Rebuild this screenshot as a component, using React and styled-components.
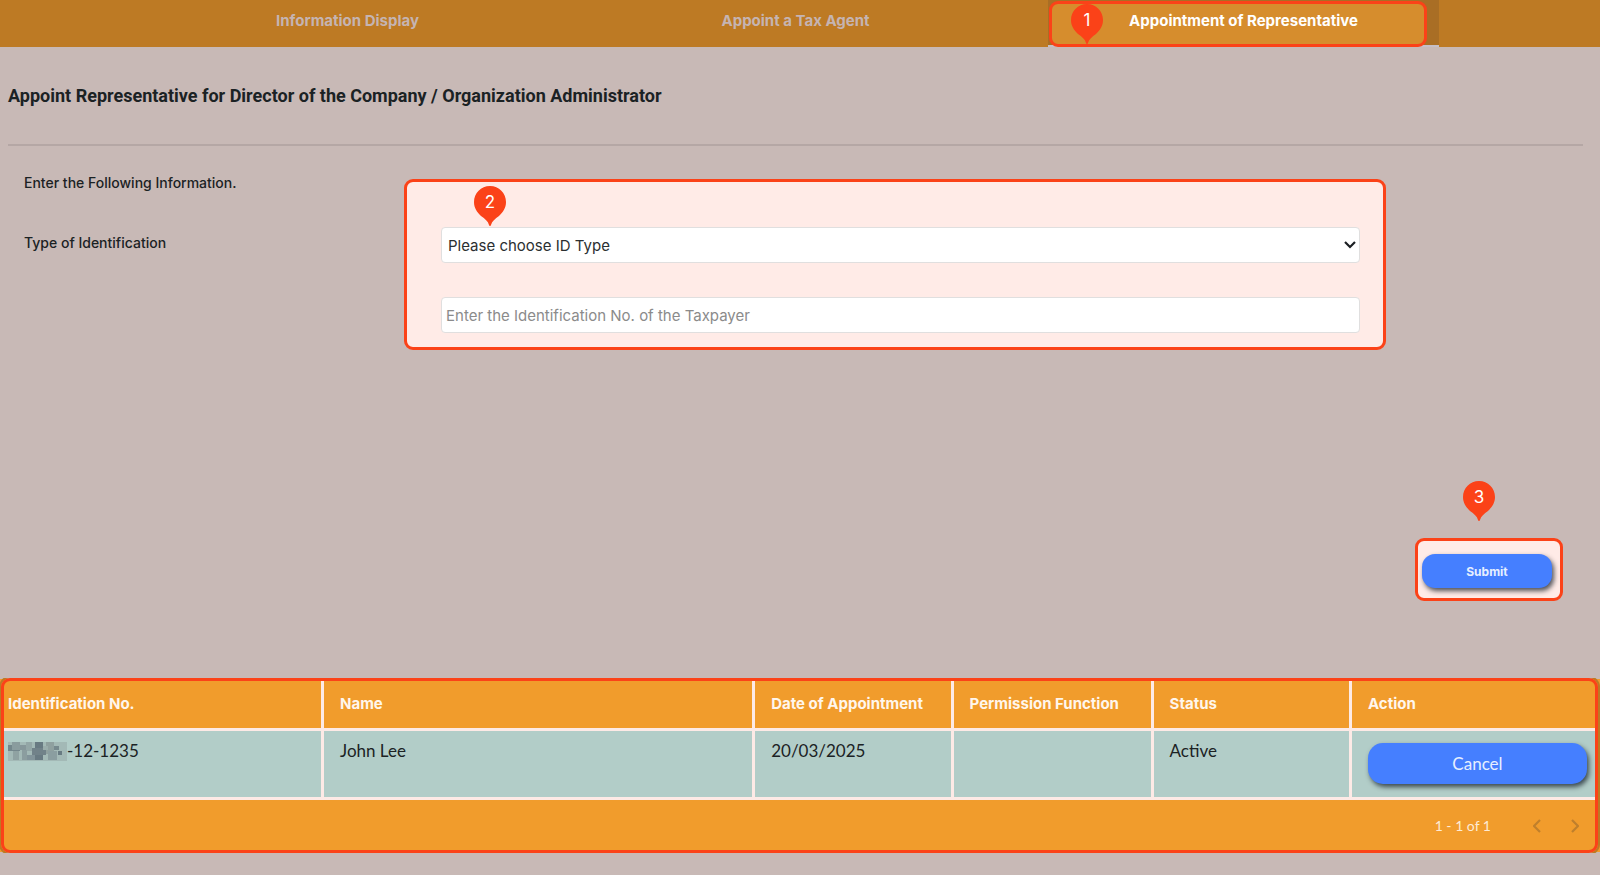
import React from "react";
import styled, { createGlobalStyle } from "styled-components";

const ui = '"Inter", "Liberation Sans", sans-serif';
const humanist = '"Lato", "Open Sans", sans-serif';
const red = "#fb4218";

const GlobalStyle = createGlobalStyle`
  *, *::before, *::after { box-sizing: border-box; }
  body { margin: 0; background: #c8b9b6; color: #1b2224; font-family: ${ui}; }
`;

const Page = styled.div`
  min-height: 100vh;
  overflow-x: hidden;
`;

const TabBar = styled.nav`
  display: grid;
  grid-template-columns: repeat(3, 1fr);
  gap: 57px;
  height: 47px;
  padding: 0 161px 0 152px;
  background: #bd7a24;
`;

const Tab = styled.button`
  position: relative;
  display: flex;
  align-items: center;
  justify-content: center;
  height: 47px;
  border: 0;
  padding: 0 0 6px;
  background: ${(p) => (p.$active ? "#a96e25" : "transparent")};
  box-shadow: ${(p) => (p.$active ? "inset 0 -2px #c6bfc6" : "none")};
  color: ${(p) => (p.$active ? "#fff" : "#c5b4b2")};
  font: 700 15px ${ui};
`;

const TabLabel = styled.span`
  position: relative;
`;

const TabHighlight = styled.span`
  position: absolute;
  inset: 1px 12px 0 1px;
  border: 3px solid ${red};
  border-radius: 9px;
  background: #d68d2d;
`;

const PinBox = styled.span`
  position: absolute;
  left: ${(p) => p.$left}px;
  top: ${(p) => p.$top}px;
  width: 32px;
  height: 40px;
  color: #fff;
  font: 400 17px/32px ${ui};
  text-align: center;
`;

const PinShape = styled.svg`
  position: absolute;
  inset: 0;
`;

const PinNumber = styled.span`
  position: relative;
  display: block;
`;

const Main = styled.main`
  padding: 0 17px 0 8px;
`;

const Title = styled.h1`
  margin: 0;
  padding: 36px 0;
  border-bottom: 2px solid #b5a7a5;
  font: 700 18px/25px "Roboto", sans-serif;
`;

const Form = styled.form`
  display: flex;
  flex-direction: column;
`;

const FormGrid = styled.div`
  display: grid;
  grid-template-columns: 396fr 982fr 197fr;
  padding-top: 33px;
`;

const Labels = styled.div`
  display: flex;
  flex-direction: column;
  gap: 40px;
  padding-left: 16px;
  font: 500 14px/20px ${ui};
  margin-top: -6px;
`;

const Lead = styled.p`
  margin: 0;
`;

const Highlight = styled.div`
  position: relative;
  border: 3px solid ${red};
  border-radius: 9px;
  background: #ffebe7;
`;

const Fields = styled(Highlight)`
  display: flex;
  flex-direction: column;
  gap: 34px;
  padding: 45px 23px 14px 34px;
`;

const control = `
  width: 100%;
  height: 36px;
  border: 1px solid #e0dfdf;
  border-radius: 4px;
  background: #fff;
  color: #2b2f31;
`;

const SelectWrap = styled.div`
  position: relative;
  display: flex;
`;

const Select = styled.select`
  ${control}
  appearance: none;
  padding: 0 32px 0 6px;
  font: 400 15px ${ui};
`;

const SelectArrow = styled.svg`
  position: absolute;
  right: 4px;
  top: 14px;
  pointer-events: none;
`;

const TextInput = styled.input`
  ${control}
  padding: 0 4px;
  font: 400 15px ${ui};
  &::placeholder { color: #8b8b8b; opacity: 1; }
`;

const Actions = styled.div`
  display: flex;
  justify-content: flex-end;
  padding: 188px 20px 78px 0;
`;

const SubmitBox = styled(Highlight)`
  width: 148px;
  padding: 13px 8px 10px 4px;
`;

const ActionButton = styled.button`
  display: block;
  width: 100%;
  height: ${(p) => (p.$large ? 41 : 34)}px;
  margin-top: ${(p) => (p.$large ? 2 : 0)}px;
  border: 0;
  padding: 0;
  border-radius: ${(p) => (p.$large ? 15 : 13)}px;
  background: #457fff;
  box-shadow: 2px 3px 5px rgba(20, 30, 40, 0.75);
  color: #e6efff;
  font: ${(p) => (p.$large ? `400 17px ${humanist}` : `700 12px ${ui}`)};
`;

const TablePanel = styled.section`
  position: relative;
  background: #f19c2c;
`;

const TableFrame = styled.div`
  position: absolute;
  inset: -1px 2px -1px 1px;
  border: 3px solid ${red};
  border-radius: 9px;
  box-shadow: 0 0 0 2px #bd7a24;
  clip-path: inset(0 -2px);
  pointer-events: none;
`;

const Table = styled.table`
  width: 100%;
  table-layout: fixed;
  border-collapse: separate;
  border-spacing: 0;
`;

const Col = styled.col`
  width: ${(p) => p.$share}%;
`;

const cell = `
  border-bottom: 3px solid #fdeae6;
  text-align: left;
  &:first-child { padding-left: 8px; }
  &:not(:last-child) { border-right: 3px solid #fdeae6; }
`;

const Th = styled.th`
  height: 52px;
  padding: 0 0 0 16px;
  color: #fff6ec;
  font: 700 15px/20px ${ui};
  ${cell}
`;

const Td = styled.td`
  height: 69px;
  padding: 10px 13px 0 16px;
  background: #b2cdc8;
  color: #1b2224;
  font: 400 17px/20px ${humanist};
  vertical-align: top;
  ${cell}
`;

const Masked = styled.span`
  display: flex;
  align-items: center;
`;

const Pager = styled.div`
  display: flex;
  align-items: center;
  justify-content: flex-end;
  height: 52px;
  padding-right: 14px;
  color: #fdebd5;
  font: 400 14px/20px ${humanist};
`;

const PagerText = styled.span`
  margin-right: 35px;
`;

const PagerButton = styled.button`
  display: flex;
  align-items: center;
  justify-content: center;
  width: 22px;
  height: 24px;
  margin-left: ${(p) => (p.$next ? 16 : 0)}px;
  border: 0;
  padding: 0;
  background: transparent;
`;

function Pin({ n, left, top }) {
  return (
    <PinBox $left={left} $top={top}>
      <PinShape width="32" height="40" viewBox="0 0 32 40" aria-hidden="true">
        <path
          fill={red}
          d="M16 0C7 0 0 7 0 16c0 6 3 10 7 14 4 3 7 5 8 9 .5 1.500 1.500 1.500 2 0 1-4 4-6 8-9 4-4 7-8 7-14C32 7 25 0 16 0z"
        />
      </PinShape>
      <PinNumber>{n}</PinNumber>
    </PinBox>
  );
}

const mosaic = [
  [0, 3, 12, 6, "#74878c"], [4, 0, 8, 8, "#8a9c9e"], [12, 3, 10, 5, "#86979a"],
  [18, 0, 6, 9, "#93a6a6"], [5, 9, 6, 9, "#8fa2a2"], [14, 8, 5, 10, "#8b9d9f"],
  [19, 13, 8, 5, "#82949a"], [27, 0, 8, 18, "#687a82"], [24, 6, 14, 7, "#718289"],
  [38, 0, 8, 12, "#8fa09f"], [40, 9, 9, 9, "#8b9ea0"], [46, 4, 5, 4, "#76898d"],
  [50, 9, 4, 4, "#687b82"], [35, 4, 5, 4, "#9aadab"],
];

function MaskedDigits() {
  return (
    <svg width="59" height="19" viewBox="0 0 59 19" role="img" aria-label="Hidden digits">
      <rect width="59" height="19" fill="#a3b9b6" />
      {mosaic.map(([x, y, w, h, fill], i) => (
        <rect key={i} x={x} y={y} width={w} height={h} fill={fill} />
      ))}
    </svg>
  );
}

function Chevron({ d }) {
  return (
    <svg width="8" height="14" viewBox="0 0 8 14" aria-hidden="true">
      <path d={d} fill="none" stroke="#bf7f2c" strokeWidth="2.2" />
    </svg>
  );
}

const columns = [
  ["Identification No.", 20.25],
  ["Name", 26.95],
  ["Date of Appointment", 12.4],
  ["Permission Function", 12.5],
  ["Status", 12.4],
  ["Action", 15.5],
];

export default function App() {
  return (
    <Page>
      <GlobalStyle />
      <TabBar>
        <Tab type="button">Information Display</Tab>
        <Tab type="button">Appoint a Tax Agent</Tab>
        <Tab type="button" $active>
          <TabHighlight />
          <Pin n={1} left={23} top={4} />
          <TabLabel>Appointment of Representative</TabLabel>
        </Tab>
      </TabBar>
      <Main>
        <Title>Appoint Representative for Director of the Company / Organization Administrator</Title>
        <Form onSubmit={(e) => e.preventDefault()}>
          <FormGrid>
            <Labels>
              <Lead>Enter the Following Information.</Lead>
              <label htmlFor="id-type">Type of Identification</label>
            </Labels>
            <Fields>
              <Pin n={2} left={67} top={4} />
              <SelectWrap>
                <Select id="id-type">
                  <option>Please choose ID Type</option>
                </Select>
                <SelectArrow width="12" height="8" viewBox="0 0 12 8" aria-hidden="true">
                  <path d="M1 1l5 5 5-5" fill="none" stroke="#1b1f22" strokeWidth="2.2" />
                </SelectArrow>
              </SelectWrap>
              <TextInput
                type="text"
                aria-label="Identification No."
                placeholder="Enter the Identification No. of the Taxpayer"
              />
            </Fields>
          </FormGrid>
          <Actions>
            <SubmitBox>
              <Pin n={3} left={45} top={-60} />
              <ActionButton type="submit">Submit</ActionButton>
            </SubmitBox>
          </Actions>
        </Form>
      </Main>
      <TablePanel>
        <Table>
          <colgroup>
            {columns.map(([name, share]) => (
              <Col key={name} $share={share} />
            ))}
          </colgroup>
          <thead>
            <tr>
              {columns.map(([name]) => (
                <Th key={name} scope="col">{name}</Th>
              ))}
            </tr>
          </thead>
          <tbody>
            <tr>
              <Td>
                <Masked>
                  <MaskedDigits />
                  -12-1235
                </Masked>
              </Td>
              <Td>John Lee</Td>
              <Td>20/03/2025</Td>
              <Td />
              <Td>Active</Td>
              <Td>
                <ActionButton type="button" $large>Cancel</ActionButton>
              </Td>
            </tr>
          </tbody>
        </Table>
        <Pager>
          <PagerText>1 - 1 of 1</PagerText>
          <PagerButton type="button" aria-label="Previous page">
            <Chevron d="M7 1L1 7l6 6" />
          </PagerButton>
          <PagerButton type="button" aria-label="Next page" $next>
            <Chevron d="M1 1l6 6-6 6" />
          </PagerButton>
        </Pager>
        <TableFrame />
      </TablePanel>
    </Page>
  );
}
